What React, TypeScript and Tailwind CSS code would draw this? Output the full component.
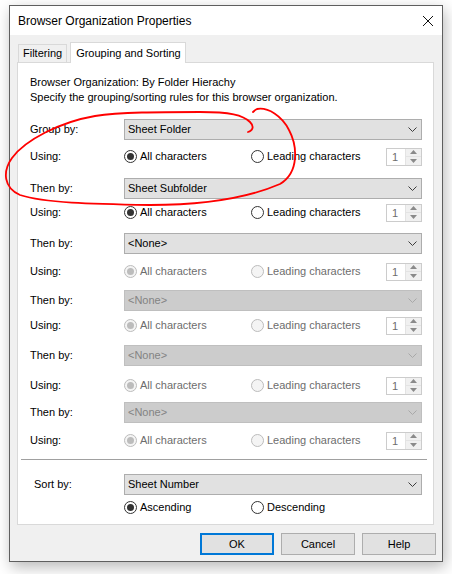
import React from "react";

type Row = {
  label: string;
  value: string;
  ddOn: boolean;
  useOn: boolean;
  ddMt: string;
  useMt: string;
};

// spacing read off the dialog, row by row
const rows: Row[] = [
  { label: "Group by:", value: "Sheet Folder", ddOn: true, useOn: true, ddMt: "mt-[14px]", useMt: "mt-[7px]" },
  { label: "Then by:", value: "Sheet Subfolder", ddOn: true, useOn: true, ddMt: "mt-[12px]", useMt: "mt-[4px]" },
  { label: "Then by:", value: "<None>", ddOn: true, useOn: false, ddMt: "mt-[11px]", useMt: "mt-[8px]" },
  { label: "Then by:", value: "<None>", ddOn: false, useOn: false, ddMt: "mt-[9px]", useMt: "mt-[5px]" },
  { label: "Then by:", value: "<None>", ddOn: false, useOn: false, ddMt: "mt-[10px]", useMt: "mt-[10px]" },
  { label: "Then by:", value: "<None>", ddOn: false, useOn: false, ddMt: "mt-[7px]", useMt: "mt-[8px]" },
];

function Chevron({ on }: { on: boolean }) {
  return (
    <svg width="9" height="5" viewBox="0 0 9 5" className="shrink-0">
      <path d="M0.5 0.5 L4.5 4.5 L8.5 0.5" fill="none" stroke={on ? "#3c3c3c" : "#a8a8a8"} strokeWidth="1" />
    </svg>
  );
}

function Dropdown({ value, on }: { value: string; on: boolean }) {
  return (
    <div
      className={`flex-1 h-[21px] flex items-center justify-between pl-[3px] pr-[4px] border ${
        on ? "bg-[#e1e1e1] border-[#adadad] text-black" : "bg-[#cccccc] border-[#bfbfbf] text-[#838383]"
      }`}
    >
      <span>{value}</span>
      <Chevron on={on} />
    </div>
  );
}

function Radio({ checked, on, label }: { checked: boolean; on: boolean; label: string }) {
  return (
    <div className="flex items-center">
      <div
        className={`w-[13px] h-[13px] rounded-full border flex items-center justify-center ${
          on ? "border-[#333333] bg-white" : "border-[#bcbcbc] bg-[#f4f4f4]"
        }`}
      >
        {checked && <div className={`w-[7px] h-[7px] rounded-full ${on ? "bg-[#333333]" : "bg-[#bcbcbc]"}`} />}
      </div>
      <span className={`ml-[3px] ${on ? "text-black" : "text-[#6d6d6d]"}`}>{label}</span>
    </div>
  );
}

function Spinner() {
  return (
    <div className="ml-auto w-[36px] h-[18px] flex border border-[#cccccc] bg-white">
      <span className="flex-1 pl-[5px] leading-[16px] text-[#6d6d6d]">1</span>
      <div className="w-[16px] flex flex-col border-l border-[#e3e3e3]">
        <div className="flex-1 flex items-center justify-center bg-[#f0f0f0] border-b border-[#e3e3e3]">
          <svg width="7" height="4" viewBox="0 0 7 4">
            <path d="M0 4 L3.5 0 L7 4 Z" fill="#8a8a8a" />
          </svg>
        </div>
        <div className="flex-1 flex items-center justify-center bg-[#f0f0f0]">
          <svg width="7" height="4" viewBox="0 0 7 4">
            <path d="M0 0 L3.5 4 L7 0 Z" fill="#8a8a8a" />
          </svg>
        </div>
      </div>
    </div>
  );
}

export default function App() {
  return (
    <div className="relative w-[452px] h-[574px] bg-white pt-[5px] pl-[9px] font-['Liberation_Sans',Arial,sans-serif] text-[11px] text-black">
      <div className="w-[434px] border border-[#5f5f5f] bg-[#f0f0f0] shadow-[2px_5px_14px_rgba(0,0,0,0.28)]">
        {/* title bar */}
        <div className="h-[29px] bg-white flex items-center justify-between pl-[8px] pr-[9px]">
          <span className="text-[12px]">Browser Organization Properties</span>
          <svg width="10" height="10" viewBox="0 0 10 10">
            <path d="M0 0 L10 10 M10 0 L0 10" stroke="#111" strokeWidth="1" />
          </svg>
        </div>

        <div className="pl-[7px] pr-[8px] pt-[7px] pb-[6px]">
          {/* tabs */}
          <div className="flex items-end h-[20px] pl-[1px]">
            <div className="h-[18px] px-[4px] flex items-center border border-b-0 border-[#d9d9d9] bg-[#f0f0f0]">
              Filtering
            </div>
            <div className="relative z-10 h-[21px] w-[116px] -mb-px ml-[3px] pl-[5px] flex items-center whitespace-nowrap border border-b-0 border-[#d9d9d9] bg-white">
              Grouping and Sorting
            </div>
          </div>

          <div className="border border-[#d9d9d9] bg-white pl-[12px] pr-[11px] pt-[12px] pb-[7px]">
            <div className="leading-[15px]">
              <p>Browser Organization: By Folder Hierachy</p>
              <p>Specify the grouping/sorting rules for this browser organization.</p>
            </div>

            {rows.map((r, i) => (
              <div key={i}>
                <div className={`flex items-center ${r.ddMt}`}>
                  <span className="w-[94px] shrink-0">{r.label}</span>
                  <Dropdown value={r.value} on={r.ddOn} />
                </div>
                <div className={`flex items-center h-[19px] ${r.useMt}`}>
                  <span className="w-[94px] shrink-0">Using:</span>
                  <div className="w-[127px]">
                    <Radio checked on={r.useOn} label="All characters" />
                  </div>
                  <Radio checked={false} on={r.useOn} label="Leading characters" />
                  <Spinner />
                </div>
              </div>
            ))}

            <div className="mt-[9px] h-px bg-[#a0a0a0] -ml-[9px] mr-[-5px]" />

            <div className="flex items-center mt-[14px]">
              <span className="w-[94px] shrink-0 pl-[4px]">Sort by:</span>
              <Dropdown value="Sheet Number" on />
            </div>
            <div className="flex items-center h-[19px] mt-[3px] pl-[94px]">
              <div className="w-[127px]">
                <Radio checked on label="Ascending" />
              </div>
              <Radio checked={false} on label="Descending" />
            </div>
          </div>

          {/* buttons */}
          <div className="flex justify-end gap-[7px] mt-[8px] -mr-[2px]">
            <button className="w-[74px] h-[22px] border-2 border-[#0078d7] bg-[#e1e1e1]">OK</button>
            <button className="w-[74px] h-[22px] border border-[#adadad] bg-[#e1e1e1]">Cancel</button>
            <button className="w-[74px] h-[22px] border border-[#adadad] bg-[#e1e1e1]">Help</button>
          </div>
        </div>
      </div>

      {/* red pen annotation over the dialog */}
      <svg className="pointer-events-none absolute inset-0" width="452" height="574" viewBox="0 0 452 574">
        <path
          d="M248 132 C252 131 255 127 250 122 C243 115 230 112 200 112 C160 112 120 112 95 116 C60 122 25 140 12 158 C2 172 4 188 20 195 C45 203 90 204 150 205 C210 205 250 197 280 184 C300 172 297 145 289 130 C282 116 268 107 257 109 C255 110 254 111 253 112"
          fill="none"
          stroke="#ff0000"
          strokeWidth="1.8"
          strokeLinecap="round"
        />
      </svg>
    </div>
  );
}
